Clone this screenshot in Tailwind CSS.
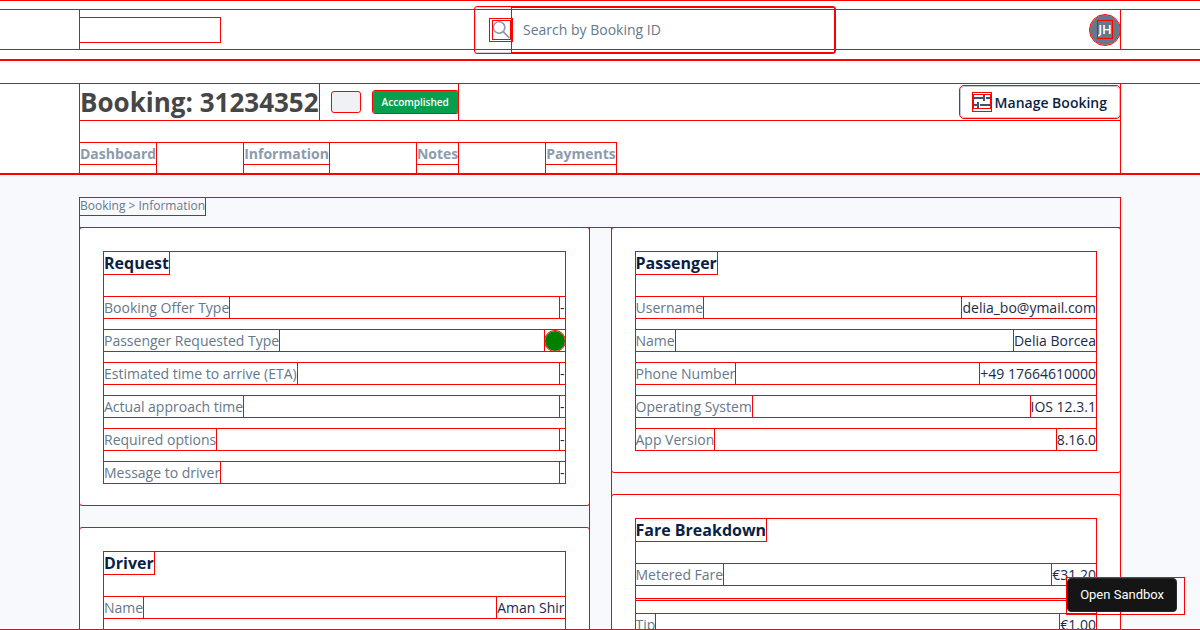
<!DOCTYPE html>
<html lang="en">
<head>
<meta charset="utf-8">
<meta name="viewport" content="width=device-width, initial-scale=1">
<title>Booking: 31234352</title>
<script src="https://cdn.jsdelivr.net/npm/@tailwindcss/browser@4"></script>
</head>
<body class="flex h-screen flex-col overflow-hidden border-b border-[#f00] bg-[#f7f9fd] font-['Open_Sans',sans-serif] text-sm/[21px] text-[#66788a] **:outline **:outline-[#f00]">

<header class="relative z-10 shrink-0 border-y border-[#f00] bg-white pt-[9px] pb-2.5">
  <div class="px-20">
    <div class="flex h-[39px] items-center justify-between">
      <a href="#" aria-label="Home" class="block h-6 w-[140px]"></a>
      <form class="-my-1 flex h-[46px] w-[360px] items-center rounded-xs border border-gray-300 bg-white pl-3.5">
        <label for="search" aria-label="Search" class="size-[22px] shrink-0">
          <svg class="size-[22px]" viewBox="0 0 22 22" fill="#8d9aa9"><path fill-rule="evenodd" d="M9 2a6.5 6.5 0 1 0 4 11.700l5.800 5.800 1.200-1.200-5.800-5.800A6.500 6.500 0 0 0 9 2ZM9 3.500a5 5 0 1 1 0 10a5 5 0 0 1 0-10Z"/></svg>
        </label>
        <input id="search" type="text" placeholder="Search by Booking ID" class="h-11 min-w-0 flex-1 px-[11px] placeholder:text-[#66788a]">
      </form>
      <div class="flex size-[30px] items-center justify-center rounded-full bg-[#66788a]">
        <span class="text-[13px]/[17px] font-semibold text-white">JH</span>
      </div>
    </div>
  </div>
</header>

<section class="shrink-0 bg-white pt-6">
  <div class="px-20">
    <div>
      <div class="flex items-center justify-between">
        <div class="flex items-center">
          <h1 class="text-[26px]/[36px] font-bold text-[#464646]">Booking: 31234352</h1>
          <span class="ml-[13px] h-5 w-7 rounded-xs bg-[#eff1f4]"></span>
          <span class="ml-[13px] rounded-xs bg-[#079e4e] px-[9px] text-[10px]/[22px] font-semibold text-white">Accomplished</span>
        </div>
        <button type="button" class="flex h-8 items-center gap-1 rounded-sm border border-[#c3c9d0] px-3 font-semibold text-[#0a1f44]">
          <svg class="size-[18px]" viewBox="0 0 18 18" fill="#42526e"><path d="M1 4h9V2h2v6h-2V6H1zM13 4h4v2h-4zM1 11h3V9h2v6H4v-2H1zM7 11h10v2H7z"/></svg>
          Manage Booking
        </button>
      </div>
      <nav class="mt-[23px] flex w-fit gap-[88px] font-bold text-[#8c9bad]">
        <div class="pb-2.5"><a href="#" class="block">Dashboard</a></div>
        <div class="pb-2.5"><a href="#" class="block">Information</a></div>
        <div class="pb-2.5"><a href="#" class="block">Notes</a></div>
        <div class="pb-2.5"><a href="#" class="block">Payments</a></div>
      </nav>
    </div>
  </div>
</section>

<main class="px-20 pt-6">
  <div>
    <p class="w-fit pb-px text-xs/[16px]">Booking &gt; Information</p>
    <div class="mt-[13px] grid grid-cols-2 items-start gap-[23px]">
      <div class="grid gap-[23px]">
        <section class="rounded-xs bg-white px-6 pt-6 pb-[22px]">
          <div>
            <h2 class="w-fit text-base/[22px] font-bold text-[#0a1f44]">Request</h2>
            <div class="mt-[23px] flex flex-col gap-3 outline-none!">
              <div class="flex justify-between"><span>Booking Offer Type</span><span class="text-[#1b2a4a]">-</span></div>
              <div class="flex justify-between"><span>Passenger Requested Type</span><span class="flex h-[21px] w-5 items-center"><span class="size-5 rounded-full bg-[#008000]"></span></span></div>
              <div class="flex justify-between"><span>Estimated time to arrive (ETA)</span><span class="text-[#1b2a4a]">-</span></div>
              <div class="flex justify-between"><span>Actual approach time</span><span class="text-[#1b2a4a]">-</span></div>
              <div class="flex justify-between"><span>Required options</span><span class="text-[#1b2a4a]">-</span></div>
              <div class="flex justify-between"><span>Message to driver</span><span class="text-[#1b2a4a]">-</span></div>
            </div>
          </div>
        </section>
        <section class="rounded-xs bg-white px-6 pt-6 pb-[22px]">
          <div>
            <h2 class="w-fit text-base/[22px] font-bold text-[#0a1f44]">Driver</h2>
            <div class="mt-[23px] flex flex-col gap-3 pb-8 outline-none!">
              <div class="flex justify-between"><span>Name</span><span class="text-[#1b2a4a]">Aman Shir</span></div>
            </div>
          </div>
        </section>
      </div>
      <div class="grid gap-[23px]">
        <section class="rounded-xs bg-white px-6 pt-6 pb-[22px]">
          <div>
            <h2 class="w-fit text-base/[22px] font-bold text-[#0a1f44]">Passenger</h2>
            <div class="mt-[23px] flex flex-col gap-3 outline-none!">
              <div class="flex justify-between"><span>Username</span><span class="text-[#1b2a4a]">delia_bo@ymail.com</span></div>
              <div class="flex justify-between"><span>Name</span><span class="text-[#1b2a4a]">Delia Borcea</span></div>
              <div class="flex justify-between"><span>Phone Number</span><span class="text-[#1b2a4a]">+49 17664610000</span></div>
              <div class="flex justify-between"><span>Operating System</span><span class="text-[#1b2a4a]">IOS 12.3.1</span></div>
              <div class="flex justify-between"><span>App Version</span><span class="text-[#1b2a4a]">8.16.0</span></div>
            </div>
          </div>
        </section>
        <section class="rounded-xs bg-white px-6 pt-6 pb-[22px]">
          <div>
            <h2 class="w-fit text-base/[22px] font-bold text-[#0a1f44]">Fare Breakdown</h2>
            <div class="mt-[23px] flex flex-col gap-3 outline-none!">
              <div class="flex justify-between"><span>Metered Fare</span><span class="text-[#1b2a4a]">€31.20</span></div>
              <hr class="my-0.5 border-gray-200">
              <div class="flex justify-between"><span>Tip</span><span class="text-[#1b2a4a]">€1.00</span></div>
            </div>
          </div>
        </section>
      </div>
    </div>
  </div>
</main>

<div class="fixed right-4 bottom-4 z-20 pr-[7px] pb-0.5">
  <button type="button" class="block h-[34px] rounded-sm border border-[#2a2a2a] bg-[#151515] px-3 pb-0.5 font-['Roboto',sans-serif] text-[13px] text-white outline-none!">Open Sandbox</button>
</div>

</body>
</html>
